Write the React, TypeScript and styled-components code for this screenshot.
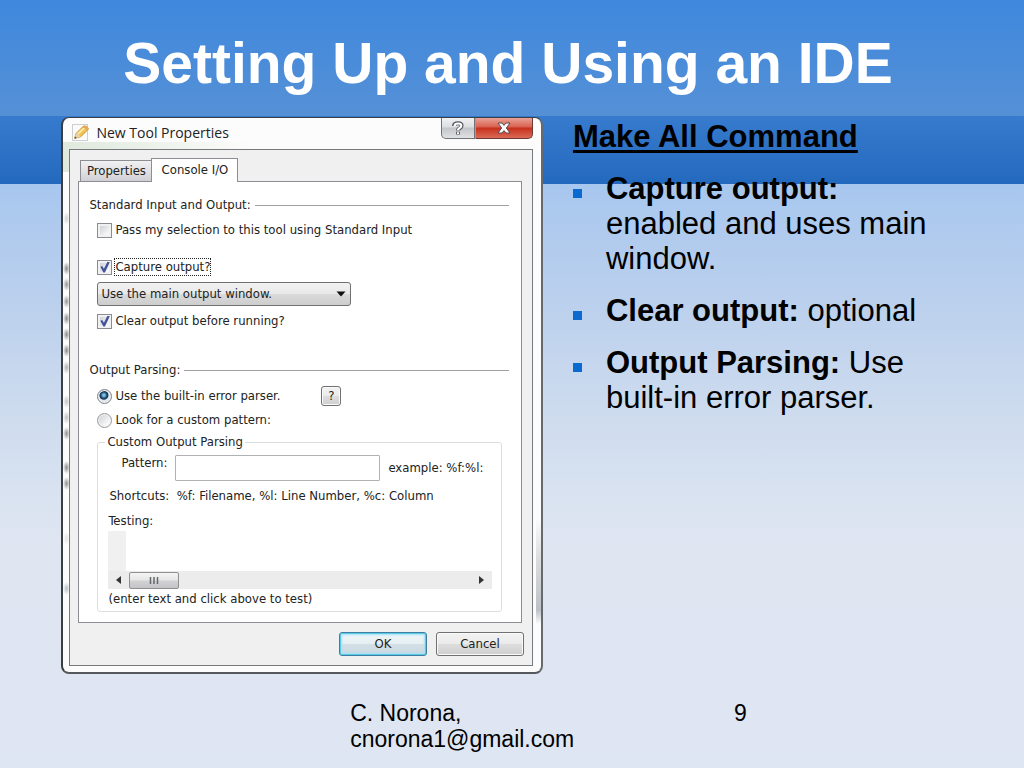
import React, { useState } from "react";
import styled, { createGlobalStyle, css } from "styled-components";

const GlobalStyle = createGlobalStyle`
  *, *::before, *::after { box-sizing: border-box; }
  body {
    margin: 0;
    background: #dfe6f3;
    font-family: "Liberation Sans", Arial, sans-serif;
    color: #000;
  }
`;

const Slide = styled.main`
  min-height: 100vh;
  display: flex;
  flex-direction: column;
  background:
    linear-gradient(#3f88dd, #5590d6) 0 0 / 100% 116px no-repeat,
    linear-gradient(#377bce, #2369bd) 0 116px / 100% 68px no-repeat,
    linear-gradient(#a8c7ef 184px, #b9cfed 290px, #cddbee 410px, #dfe6f2 540px, #dfe6f3);
`;

const SlideTitle = styled.h1`
  margin: 0;
  height: 116px;
  padding: 30px 16px 0 8px;
  font-size: 57px;
  line-height: 66px;
  font-weight: 700;
  color: #fff;
  text-align: center;
`;

const Content = styled.div`
  display: grid;
  grid-template-columns: minmax(0, 482fr) minmax(0, 390fr);
  column-gap: 30px;
  padding: 0 6%;
  align-items: start;
`;

const Notes = styled.section`
  padding-right: 24px;
  padding-top: 3px;
  font-size: 31px;
  line-height: 35px;
`;

const NotesTitle = styled.h2`
  margin: 0 0 17px;
  font-size: 31px;
  line-height: 35px;
  text-decoration: underline;
  text-decoration-thickness: 3px;
  text-underline-offset: 3px;
`;

const NoteList = styled.ul`
  list-style: none;
  margin: 0;
  padding: 0;
  display: flex;
  flex-direction: column;
  gap: 17px;
`;

const Note = styled.li`
  display: grid;
  grid-template-columns: 9px 1fr;
  column-gap: 24px;

  &::before {
    content: "";
    height: 9px;
    margin-top: 18px;
    background: #0a6ad0;
  }
`;

const SlideFooter = styled.footer`
  display: grid;
  grid-template-columns: 384fr 290fr;
  margin: 26px 0 0 34%;
  padding: 0 0 16px 2px;
  font-size: 23px;
  line-height: 26px;
`;

const Author = styled.address`
  font-style: normal;
  max-width: 230px;
`;

/* ---------- dialog ---------- */

/* Soft shapes that show through the glass on the left frame: offset from the top, and grey. */
const glassSpots: [number, string][] = [
  [100, "#d4d4d4"], [150, "#8c8c8c"], [166, "#969696"], [183, "#969696"], [200, "#8c8c8c"],
  [216, "#8c8c8c"], [232, "#8c8c8c"], [249, "#b0b0b0"], [283, "#c4c4c4"], [299, "#c0c0c0"],
  [315, "#909090"], [349, "#8c8c8c"], [365, "#909090"], [420, "#e4e4e4"], [470, "#b8c0c6"],
];

const glass = glassSpots
  .map(([y, grey]) => `radial-gradient(closest-side, ${grey}, transparent) 0 ${y - 6}px / 7px 13px no-repeat`)
  .join(", ");

const Dialog = styled.section`
  margin-top: 1px;
  border: 2px solid #3a3d42;
  border-top-width: 1px;
  border-right-color: #66696e;
  border-bottom-color: #55585c;
  border-radius: 8px;
  padding: 0 8px 6px 6px;
  background:
    ${glass},
    linear-gradient(90deg, #dfe9dc, #fcfcfc 40%) 0 24px / 100% 30px no-repeat,
    linear-gradient(transparent 400px, #ddd 440px, #bcc2c8 492px, transparent 506px) 100% 0 / 5px 100% no-repeat,
    #fcfcfc;
  font-family: "DejaVu Sans Condensed", "DejaVu Sans", Tahoma, sans-serif;
  font-size: 13px;
  line-height: 16px;
  color: #222;
`;

const TitleBar = styled.header`
  display: flex;
  align-items: flex-start;
  height: 31px;
  padding-left: 3px;
`;

const DialogTitle = styled.h2`
  margin: 6px auto 0 7px;
  font-family: "Open Sans", "Noto Sans", sans-serif;
  font-size: 14px;
  line-height: 18px;
  font-weight: 400;
`;

const PencilSvg = styled.svg`
  width: 17px;
  height: 18px;
  margin-top: 6px;
`;

const CaptionButton = styled.button<{ $close?: boolean }>`
  width: 34px;
  height: 21px;
  padding: 0;
  display: grid;
  place-items: center;
  border: 1px solid #6f7277;
  border-top: 0;
  border-radius: 0 0 0 5px;
  background: linear-gradient(#f0f1f2, #dcdee0 45%, #c3c6c9 50%, #dfe1e3);
  ${(p) =>
    p.$close &&
    css`
      width: 58px;
      border-color: #6d3a36;
      border-left-color: #a39a99;
      border-radius: 0 0 5px 0;
      background: linear-gradient(#e9a297, #d9614f 45%, #c6301c 50%, #dc6a55);
    `}
`;

const Client = styled.div`
  border: 1px solid #77797c;
  background: #f0f0f0;
  padding: 8px 8px 9px;
`;

const TabList = styled.div`
  display: flex;
  align-items: flex-end;
  padding-left: 2px;
`;

const Tab = styled.button<{ $active?: boolean }>`
  font: inherit;
  color: inherit;
  width: 72px;
  height: 21px;
  padding: 0;
  border: 1px solid #8c8e94;
  border-bottom: 0;
  background: linear-gradient(#f1f1f2, #e2e2e5 50%, #cfcfd6);
  ${(p) =>
    p.$active &&
    css`
      width: 87px;
      height: 24px;
      margin-bottom: -1px;
      margin-left: -1px;
      padding-bottom: 2px;
      background: #fff;
      z-index: 1;
    `}
`;

const TabPage = styled.div`
  margin-right: 2px;
  border: 1px solid #8c8e94;
  background: #fff;
  padding: 15px 12px 10px 10px;
`;

const Group = styled.fieldset`
  border: 0;
  margin: 0;
  padding: 0;
  min-width: 0;

  & + & { margin-top: 33px; }
`;

const GroupTitle = styled.legend`
  display: flex;
  align-items: center;
  gap: 4px;
  width: 100%;
  padding: 0;

  &::after {
    content: "";
    flex: 1;
    height: 1px;
    background: #a0a0a0;
  }
`;

const Row = styled.div<{ $top: number }>`
  display: flex;
  align-items: center;
  gap: 3px;
  min-height: 16px;
  margin-top: ${(p) => p.$top}px;
  padding-left: 8px;
`;

const OptionLabel = styled.label<{ $focused?: boolean }>`
  outline: ${(p) => (p.$focused ? "1px dotted #222" : "none")};
`;

const Check = styled.input`
  appearance: none;
  flex: none;
  width: 15px;
  height: 15px;
  margin: 0;
  display: grid;
  place-items: center;
  border: 1px solid #8b8d92;
  background: linear-gradient(135deg, #c4c8d0, #f7f7f8 75%);
  box-shadow: inset 0 0 0 2px #f1f1f1;

  &:checked::after {
    content: "";
    width: 10px;
    height: 11px;
    background: #44549c;
    clip-path: polygon(4% 48%, 22% 42%, 40% 66%, 76% 0, 98% 6%, 50% 100%, 34% 100%);
  }
`;

const Radio = styled.input`
  appearance: none;
  flex: none;
  width: 15px;
  height: 15px;
  margin: 0;
  border: 1px solid #97999d;
  border-radius: 50%;
  background: linear-gradient(135deg, #c9ccd1, #f9f9f9 75%);
  box-shadow: inset 0 0 0 1px #f4f4f4;

  &:checked {
    border-color: #7b8188;
    background: radial-gradient(circle at 45% 40%, #7fc0dd 0 1px, #1d4f7c 3px, #12304f 4px, #dfe6ec 5px);
  }
`;

const SelectWrap = styled.div`
  display: grid;
  width: 254px;
  margin: 7px 0 0 8px;
  align-items: center;

  > * { grid-area: 1 / 1; }
  > svg { justify-self: end; margin-right: 5px; pointer-events: none; }
`;

const Select = styled.select`
  appearance: none;
  font: inherit;
  color: inherit;
  width: 100%;
  height: 24px;
  padding: 0 20px 0 3px;
  border: 1px solid #707070;
  border-radius: 3px;
  background: linear-gradient(#f2f2f2, #e9e9e9 48%, #dadada 52%, #cdcdcd);
`;

const PushButton = styled.button<{ $kind?: "default" | "small" }>`
  font: inherit;
  color: inherit;
  width: 88px;
  height: 24px;
  padding: 0;
  border: 1px solid #707070;
  border-radius: 3px;
  box-shadow: inset 0 0 0 1px #fafafa;
  background: linear-gradient(#f2f2f2, #ebebeb 48%, #dddddd 52%, #cfcfcf);
  ${(p) =>
    p.$kind === "default" &&
    css`
      border-color: #3c7f9e;
      box-shadow: inset 0 0 0 1px #5cc8ea, inset 0 0 2px 2px #a5e2f5;
      background: linear-gradient(#eef6f9, #e6eff3 48%, #d3dfe5 52%, #cbd9e0);
    `}
  ${(p) =>
    p.$kind === "small" &&
    css`
      width: 20px;
      height: 20px;
      margin-left: 38px;
    `}
`;

const CustomBox = styled.fieldset`
  margin: 6px 7px 0 8px;
  padding: 5px 9px 4px 10px;
  min-width: 0;
  border: 1px solid #dcdfe2;
  border-radius: 3px;

  > legend { padding: 0 2px; margin-left: -3px; }
`;

const PatternRow = styled.div`
  display: flex;
  align-items: center;
  gap: 8px;
  padding-left: 13px;

  > label { align-self: flex-start; }
`;

const PatternInput = styled.input`
  font: inherit;
  flex: 0 1 205px;
  min-width: 0;
  height: 26px;
  padding: 0 4px;
  border: 1px solid #b0b2b6;
  border-radius: 1px;
  background: #fff;
`;

const Line = styled.p<{ $top?: number; $indent?: number }>`
  margin: ${(p) => p.$top ?? 0}px 0 0 ${(p) => p.$indent ?? 0}px;
`;

const TestArea = styled.textarea`
  display: block;
  width: 100%;
  height: 40px;
  margin-top: 2px;
  padding: 0 0 0 22px;
  border: 0;
  resize: none;
  font: inherit;
  background: linear-gradient(90deg, #f0f0f0 18px, #fff 18px);
`;

const ScrollTrack = styled.div`
  display: flex;
  align-items: center;
  height: 18px;
  background: #ececec;
`;

const ScrollArrow = styled.button`
  width: 20px;
  height: 18px;
  padding: 0;
  border: 0;
  background: none;
  display: grid;
  place-items: center;
  &:last-child { margin-left: auto; }
`;

const ScrollThumb = styled.button`
  width: 50px;
  height: 17px;
  padding: 0;
  margin-left: 1px;
  border: 1px solid #8f9093;
  border-radius: 2px;
  display: grid;
  place-items: center;
  background: linear-gradient(#f4f4f4, #e6e6e6 48%, #d2d2d4 52%, #c4c4c8);
`;

const Actions = styled.div`
  display: flex;
  justify-content: flex-end;
  gap: 9px;
  margin-top: 9px;
`;

function PencilIcon() {
  return (
    <PencilSvg viewBox="0 0 17 18" aria-hidden="true">
      <rect x="0.5" y="0.5" width="15" height="16" fill="#fbfbfb" stroke="#cfcfcf" />
      <path d="M2.5 14.5 L4 9.5 L11.5 2 Q15 1.2 16.5 5 L8.8 12.8 Z" fill="#f2c14a" stroke="#b98a2c" strokeWidth="0.8" />
      <path d="M5.8 10 L12.8 3.4" stroke="#fbe7a4" strokeWidth="2" />
      <path d="M11.5 2 Q15 1.2 16.5 5 L15 6.4 Q13.6 3.8 10.4 3.4 Z" fill="#e9a65c" />
      <path d="M2.5 14.5 L4 9.5 Q7 10 8.8 12.8 Z" fill="#e7d3ac" />
      <path d="M2.5 14.5 L3.2 12.4 L4.8 13.9 Z" fill="#444" />
    </PencilSvg>
  );
}

function HelpIcon() {
  return (
    <svg width="12" height="15" viewBox="0 0 12 15" aria-hidden="true">
      <g fill="none" strokeLinejoin="round">
        <path d="M2 5 Q2 2.2 6 2.2 Q9.6 2.2 9.6 4.8 Q9.6 6.4 7.6 7.4 Q6 8.2 6 9.4 M6 10.8 V13.4" stroke="#55585e" strokeWidth="4" />
        <path d="M2.6 5 Q2.6 2.5 6 2.5 Q9.3 2.5 9.3 4.8 Q9.3 6.1 7.6 7 Q6 7.9 6 9.2 M6 11.2 V13" stroke="#fff" strokeWidth="2.2" />
      </g>
    </svg>
  );
}

function CloseIcon() {
  return (
    <svg width="14" height="12" viewBox="0 0 14 12" aria-hidden="true">
      <path
        d="M1 1 H5 L7 3.4 L9 1 H13 L9.3 6 L13 11 H9 L7 8.6 L5 11 H1 L4.7 6 Z"
        fill="#fff"
        stroke="#5b4a50"
        strokeWidth="1"
        strokeLinejoin="round"
      />
    </svg>
  );
}

function ToolDialog() {
  const [pass, setPass] = useState(false);
  const [capture, setCapture] = useState(true);
  const [clear, setClear] = useState(true);
  const [parser, setParser] = useState("builtin");

  return (
    <Dialog role="dialog" aria-labelledby="dialog-title">
      <TitleBar>
        <PencilIcon />
        <DialogTitle id="dialog-title">New Tool Properties</DialogTitle>
        <CaptionButton type="button" aria-label="Help"><HelpIcon /></CaptionButton>
        <CaptionButton type="button" aria-label="Close" $close><CloseIcon /></CaptionButton>
      </TitleBar>
      <Client>
        <TabList role="tablist">
          <Tab type="button" role="tab" aria-selected="false">Properties</Tab>
          <Tab type="button" role="tab" aria-selected="true" $active>Console I/O</Tab>
        </TabList>
        <TabPage role="tabpanel">
          <Group>
            <GroupTitle>Standard Input and Output:</GroupTitle>
            <Row $top={9}>
              <Check type="checkbox" id="pass" checked={pass} onChange={(e) => setPass(e.target.checked)} />
              <OptionLabel htmlFor="pass">Pass my selection to this tool using Standard Input</OptionLabel>
            </Row>
            <Row $top={21}>
              <Check type="checkbox" id="capture" checked={capture} onChange={(e) => setCapture(e.target.checked)} />
              <OptionLabel htmlFor="capture" $focused>Capture output?</OptionLabel>
            </Row>
            <SelectWrap>
              <Select aria-label="Output destination">
                <option>Use the main output window.</option>
              </Select>
              <svg width="10" height="6" viewBox="0 0 10 6" aria-hidden="true">
                <path d="M0.5 0.5 H9.5 L5 5.5 Z" fill="#111" />
              </svg>
            </SelectWrap>
            <Row $top={7}>
              <Check type="checkbox" id="clear" checked={clear} onChange={(e) => setClear(e.target.checked)} />
              <OptionLabel htmlFor="clear">Clear output before running?</OptionLabel>
            </Row>
          </Group>
          <Group>
            <GroupTitle>Output Parsing:</GroupTitle>
            <Row $top={8}>
              <Radio type="radio" name="parser" id="builtin" checked={parser === "builtin"} onChange={() => setParser("builtin")} />
              <OptionLabel htmlFor="builtin">Use the built-in error parser.</OptionLabel>
              <PushButton type="button" $kind="small">?</PushButton>
            </Row>
            <Row $top={6}>
              <Radio type="radio" name="parser" id="custom" checked={parser === "custom"} onChange={() => setParser("custom")} />
              <OptionLabel htmlFor="custom">Look for a custom pattern:</OptionLabel>
            </Row>
            <CustomBox>
              <legend>Custom Output Parsing</legend>
              <PatternRow>
                <label htmlFor="pattern">Pattern:</label>
                <PatternInput id="pattern" type="text" />
                <span>example: %f:%l:</span>
              </PatternRow>
              <Line $top={7} $indent={1}>Shortcuts:&nbsp; %f: Filename, %l: Line Number, %c: Column</Line>
              <Line $top={9}><label htmlFor="testing">Testing:</label></Line>
              <TestArea id="testing" />
              <ScrollTrack>
                <ScrollArrow type="button" aria-label="Scroll left">
                  <svg width="5" height="8" viewBox="0 0 5 8"><path d="M5 0 V8 L0 4 Z" fill="#333" /></svg>
                </ScrollArrow>
                <ScrollThumb type="button" aria-label="Scroll thumb">
                  <svg width="10" height="7" viewBox="0 0 10 7">
                    <path d="M1.5 0 V7 M5 0 V7 M8.5 0 V7" stroke="#66686c" strokeWidth="1.5" />
                  </svg>
                </ScrollThumb>
                <ScrollArrow type="button" aria-label="Scroll right">
                  <svg width="5" height="8" viewBox="0 0 5 8"><path d="M0 0 V8 L5 4 Z" fill="#333" /></svg>
                </ScrollArrow>
              </ScrollTrack>
              <Line $top={2}>(enter text and click above to test)</Line>
            </CustomBox>
          </Group>
        </TabPage>
        <Actions>
          <PushButton type="button" $kind="default">OK</PushButton>
          <PushButton type="button">Cancel</PushButton>
        </Actions>
      </Client>
    </Dialog>
  );
}

export default function App() {
  return (
    <>
      <GlobalStyle />
      <Slide>
        <SlideTitle>Setting Up and Using an IDE</SlideTitle>
        <Content>
          <ToolDialog />
          <Notes>
            <NotesTitle>Make All Command</NotesTitle>
            <NoteList>
              <Note><span><b>Capture output:</b> enabled and uses main window.</span></Note>
              <Note><span><b>Clear output:</b> optional</span></Note>
              <Note><span><b>Output Parsing:</b> Use built-in error parser.</span></Note>
            </NoteList>
          </Notes>
        </Content>
        <SlideFooter>
          <Author>C. Norona, cnorona1@gmail.com</Author>
          <span>9</span>
        </SlideFooter>
      </Slide>
    </>
  );
}
